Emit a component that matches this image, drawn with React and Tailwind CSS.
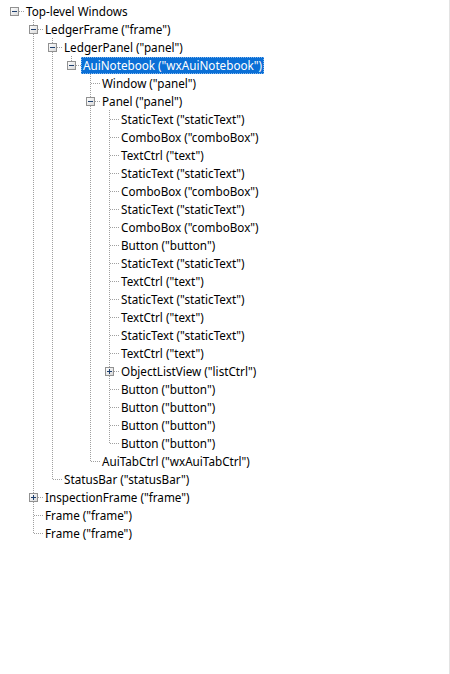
const tree = {
  label: "Top-level Windows",
  children: [
    {
      label: 'LedgerFrame ("frame")',
      children: [
        {
          label: 'LedgerPanel ("panel")',
          children: [
            {
              label: 'AuiNotebook ("wxAuiNotebook")',
              selected: true,
              children: [
                { label: 'Window ("panel")' },
                {
                  label: 'Panel ("panel")',
                  children: [
                    { label: 'StaticText ("staticText")' },
                    { label: 'ComboBox ("comboBox")' },
                    { label: 'TextCtrl ("text")' },
                    { label: 'StaticText ("staticText")' },
                    { label: 'ComboBox ("comboBox")' },
                    { label: 'StaticText ("staticText")' },
                    { label: 'ComboBox ("comboBox")' },
                    { label: 'Button ("button")' },
                    { label: 'StaticText ("staticText")' },
                    { label: 'TextCtrl ("text")' },
                    { label: 'StaticText ("staticText")' },
                    { label: 'TextCtrl ("text")' },
                    { label: 'StaticText ("staticText")' },
                    { label: 'TextCtrl ("text")' },
                    { label: 'ObjectListView ("listCtrl")', collapsed: true, children: [] },
                    { label: 'Button ("button")' },
                    { label: 'Button ("button")' },
                    { label: 'Button ("button")' },
                    { label: 'Button ("button")' },
                  ],
                },
                { label: 'AuiTabCtrl ("wxAuiTabCtrl")' },
              ],
            },
          ],
        },
        { label: 'StatusBar ("statusBar")' },
      ],
    },
    { label: 'InspectionFrame ("frame")', collapsed: true, children: [] },
    { label: 'Frame ("frame")' },
    { label: 'Frame ("frame")' },
  ],
};

// flatten the tree into rows, keeping which ancestor columns still need a line
const flatten = (node, level, isLast, guides, out) => {
  out.push({ ...node, level, isLast, guides });
  if (node.children && !node.collapsed) {
    node.children.forEach((child, i) =>
      flatten(child, level + 1, i === node.children.length - 1, [...guides, !isLast], out),
    );
  }
  return out;
};

const LINE = "#a0a0a0";

const Guide = () => (
  <svg width="19" height="18" className="shrink-0">
    <line x1="9.5" y1="0" x2="9.5" y2="18" stroke={LINE} strokeDasharray="1 1" />
  </svg>
);

const Connector = ({ root, isLast, expandable, collapsed }) => (
  <svg width="19" height="18" className="shrink-0">
    {!root && <line x1="9.5" y1="0" x2="9.5" y2="9" stroke={LINE} strokeDasharray="1 1" />}
    {!root && !isLast && (
      <line x1="9.5" y1="10" x2="9.5" y2="18" stroke={LINE} strokeDasharray="1 1" />
    )}
    <line x1="10" y1="9.5" x2="19" y2="9.5" stroke={LINE} strokeDasharray="1 1" />
    {expandable && (
      <g>
        <defs>
          <linearGradient id="boxfill" x1="0" y1="0" x2="1" y2="1">
            <stop offset="0" stopColor="#ffffff" />
            <stop offset="1" stopColor="#d8d8d8" />
          </linearGradient>
        </defs>
        <rect x="5.5" y="5.5" width="8" height="8" fill="url(#boxfill)" stroke="#919191" />
        <line x1="7" y1="9.5" x2="12" y2="9.5" stroke="#1e3f6e" />
        {collapsed && <line x1="9.5" y1="7" x2="9.5" y2="12" stroke="#1e3f6e" />}
      </g>
    )}
  </svg>
);

const Row = ({ row }) => (
  <div className="flex h-[18px] items-center">
    {row.guides.map((show, i) =>
      show ? <Guide key={i} /> : <span key={i} className="w-[19px] shrink-0" />,
    )}
    <Connector
      root={row.level === 0}
      isLast={row.isLast}
      expandable={!!row.children}
      collapsed={row.collapsed}
    />
    <span
      className={
        row.selected
          ? "h-[17px] leading-[15px] px-[1px] whitespace-nowrap bg-[#0a6fd6] text-white border border-dotted border-[#7fb6ef]"
          : "h-[17px] leading-[17px] px-[2px] whitespace-nowrap text-black"
      }
    >
      {row.label}
    </span>
  </div>
);

export default function App() {
  const rows = flatten(tree, 0, true, [], []);

  return (
    <div className="w-[450px] h-[674px] bg-white border-r border-[#e3e3e3] overflow-hidden font-['Noto_Sans',sans-serif] text-[11.7px]">
      <div className="pt-[2px] pl-[5px]">
        {rows.map((row, i) => (
          <Row key={i} row={row} />
        ))}
      </div>
    </div>
  );
}
